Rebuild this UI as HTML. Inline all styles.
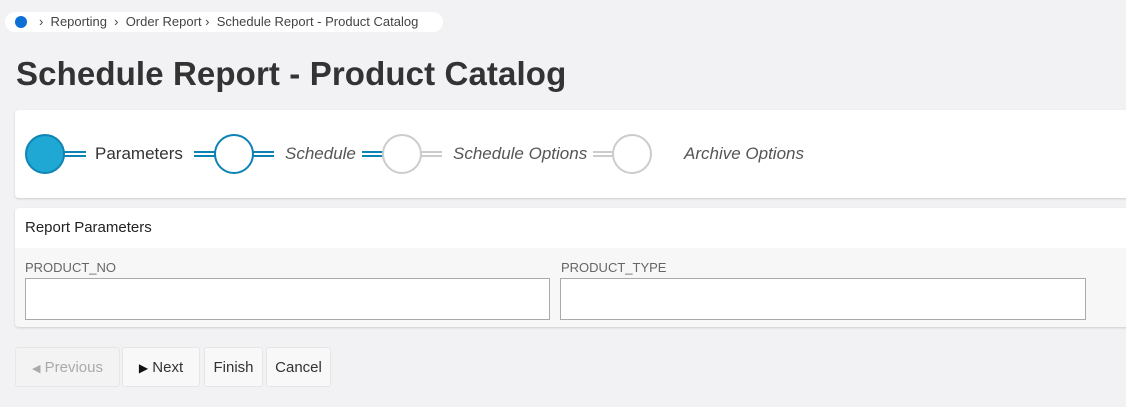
<!DOCTYPE html><html><head><style>
body{margin:0;width:1126px;height:407px;background:#f2f1f4;font-family:"Liberation Sans",sans-serif;position:relative;overflow:hidden;color:#333}
.a{position:absolute}
.bc{left:5px;top:12px;width:438px;height:20px;background:#fff;border-radius:10px;font-size:13px;color:#444;line-height:20px}
.title{left:16px;top:55px;font-size:33px;font-weight:bold;color:#333;letter-spacing:0.12px}
.panel{background:#fff;border-radius:4px;box-shadow:0 1px 2px rgba(0,0,0,.15)}
.c{width:36px;height:36px;border-radius:50%;border:2px solid #0d82b4;background:#fff;top:134px}
.ln{height:6px;box-sizing:border-box;border-top:2px solid #0d82b4;border-bottom:2px solid #0d82b4;top:151px}
.g{border-color:#ccc}
.st{top:144px;font-size:17px;color:#333}
.it{font-style:italic;color:#555}
.lbl{font-size:13px;color:#666;top:260px}
.inp{top:278px;height:42px;box-sizing:border-box;border:1px solid #aaa;background:#fff}
.btn{top:347px;height:40px;box-sizing:border-box;background:#f8f8f8;border:1px solid #e6e6e6;border-radius:3px;font-size:15px;line-height:40px;text-align:center;color:#333}
</style></head><body>
<div class="a bc"><span class="a" style="left:10px;top:4px;width:12px;height:12px;border-radius:50%;background:#0b6fd6"></span><span class="a" style="left:34px">›&nbsp; Reporting &nbsp;›&nbsp; Order Report › &nbsp;Schedule Report - Product Catalog</span></div>
<div class="a title">Schedule Report - Product Catalog</div>
<div class="a panel" style="left:15px;top:110px;width:1120px;height:88px"></div>
<div class="a ln" style="left:62px;width:24px"></div>
<div class="a c" style="left:25px;background:#1ea8d3;border-color:#1184b5"></div>
<div class="a st" style="left:95px">Parameters</div>
<div class="a ln" style="left:194px;width:26px"></div>
<div class="a ln" style="left:252px;width:22px"></div>
<div class="a c" style="left:214px"></div>
<div class="a st it" style="left:285px">Schedule</div>
<div class="a ln" style="left:362px;width:24px"></div>
<div class="a ln g" style="left:418px;width:24px"></div>
<div class="a c g" style="left:382px"></div>
<div class="a st it" style="left:453px">Schedule Options</div>
<div class="a ln g" style="left:593px;width:24px"></div>
<div class="a c g" style="left:612px"></div>
<div class="a st it" style="left:684px">Archive Options</div>
<div class="a panel" style="left:15px;top:208px;width:1120px;height:119px;background:#f7f7f7;overflow:hidden"><div style="height:40px;background:#fff"></div></div>
<div class="a" style="left:25px;top:219px;font-size:15px;color:#222">Report Parameters</div>
<div class="a lbl" style="left:25px">PRODUCT_NO</div>
<div class="a lbl" style="left:561px">PRODUCT_TYPE</div>
<div class="a inp" style="left:25px;width:525px"></div>
<div class="a inp" style="left:560px;width:526px"></div>
<div class="a btn" style="left:15px;width:105px;color:#aaa;background:#f3f3f3"><span style="font-size:11px">◀</span> Previous</div>
<div class="a btn" style="left:122px;width:78px"><span style="font-size:12px;color:#111">▶</span> Next</div>
<div class="a btn" style="left:204px;width:59px">Finish</div>
<div class="a btn" style="left:266px;width:65px">Cancel</div>
</body></html>
